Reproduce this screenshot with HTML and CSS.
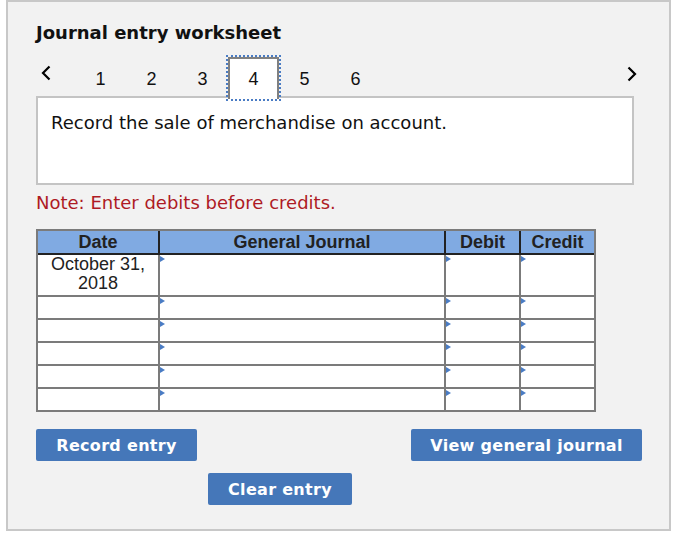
FILE: index.html
```html
<!DOCTYPE html>
<html lang="en">
<head>
    <meta charset="UTF-8">
    <title>Journal entry worksheet</title>
    <link rel="stylesheet" href="styles.css">
</head>
<body>
    <div class="panel">
        <h1>Journal entry worksheet</h1>
        <div class="tabs">
            <span class="arrow prev">
                <svg width="10" height="16" viewBox="0 0 10 16"><polyline points="8.5,1.5 2,8 8.5,14.5" fill="none" stroke="#000" stroke-width="2.2"/></svg>
            </span>
            <span class="tab">1</span>
            <span class="tab">2</span>
            <span class="tab">3</span>
            <span class="tab active">4</span>
            <span class="tab">5</span>
            <span class="tab">6</span>
            <span class="arrow next">
                <svg width="10" height="16" viewBox="0 0 10 16"><polyline points="1.5,1.5 8,8 1.5,14.5" fill="none" stroke="#000" stroke-width="2.2"/></svg>
            </span>
        </div>
        <div class="question">Record the sale of merchandise on account.</div>
        <div class="note">Note: Enter debits before credits.</div>

        <table class="journal">
            <thead>
                <tr>
                    <th class="c-date">Date</th>
                    <th class="c-gj">General Journal</th>
                    <th class="c-amt">Debit</th>
                    <th class="c-amt">Credit</th>
                </tr>
            </thead>
            <tbody>
                <tr class="first">
                    <td class="date">October 31,<br>2018</td>
                    <td class="mark"></td>
                    <td class="mark"></td>
                    <td class="mark"></td>
                </tr>
                <tr><td></td><td class="mark"></td><td class="mark"></td><td class="mark"></td></tr>
                <tr><td></td><td class="mark"></td><td class="mark"></td><td class="mark"></td></tr>
                <tr><td></td><td class="mark"></td><td class="mark"></td><td class="mark"></td></tr>
                <tr><td></td><td class="mark"></td><td class="mark"></td><td class="mark"></td></tr>
                <tr><td></td><td class="mark"></td><td class="mark"></td><td class="mark"></td></tr>
            </tbody>
        </table>

        <div class="actions">
            <button class="btn record">Record entry</button>
            <button class="btn view">View general journal</button>
        </div>
        <button class="btn clear">Clear entry</button>
    </div>
</body>
</html>
```

FILE: styles.css
```css
body {
    margin: 0;
    padding: 0;
    background-color: #fff;
    font-family: "DejaVu Sans", Verdana, sans-serif;
}
.panel {
    width: 633px;
    height: 506px;
    margin: 0 0 0 6px;
    padding: 21px 0 0 28px;
    background-color: #f2f2f2;
    border: 2px solid #c8c8c8;
}
h1 {
    margin: 0;
    font-size: 18px;
    line-height: 20px;
    font-weight: bold;
    color: #111;
}
.tabs {
    display: flex;
    align-items: flex-start;
    width: 601px;
    height: 39px;
    margin-top: 14px;
    font-family: "Liberation Sans", Arial, sans-serif;
    font-size: 18px;
    line-height: 20px;
}
.arrow {
    display: block;
    height: 16px;
    padding-top: 8px;
}
.arrow svg {
    display: block;
}
.arrow.prev {
    width: 34px;
    padding-left: 5px;
}
.arrow.next {
    margin-left: auto;
    padding-top: 9px;
}
.tab {
    display: block;
    width: 51px;
    height: 42px;
    box-sizing: border-box;
    padding-top: 12px;
    text-align: center;
    color: #111;
}
.tab.active {
    position: relative;
    z-index: 1;
    padding-top: 10px;
    background-color: #fff;
    border: 2px solid #808080;
    border-bottom: none;
    outline: 2px dotted #4a7cc4;
}
.question {
    width: 581px;
    height: 70px;
    padding: 15px 0 0 13px;
    background-color: #fff;
    border: 2px solid #c4c4c4;
    font-size: 18px;
    line-height: 20px;
    color: #111;
}
.note {
    margin-top: 8px;
    font-size: 18px;
    line-height: 20px;
    color: #ae1a24;
}
.journal {
    margin-top: 16px;
    width: 560px;
    border-collapse: separate;
    border-spacing: 0;
    border: 2px solid #7b7b7b;
    font-family: "Liberation Sans", Arial, sans-serif;
    font-size: 18px;
    color: #222;
}
.journal th {
    height: 22px;
    padding: 0;
    line-height: 20px;
    background-color: #80aae2;
    border-bottom: 2px solid #222;
    font-weight: bold;
    text-align: center;
}
.journal th + th {
    border-left: 2px solid #222;
}
.journal td {
    height: 21px;
    padding: 0;
    background-color: #fff;
    border-top: 2px solid #7b7b7b;
}
.journal td + td {
    border-left: 2px solid #7b7b7b;
}
.journal tr.first td {
    height: 40px;
    border-top: none;
    vertical-align: top;
}
.journal td.date {
    text-align: center;
    line-height: 19px;
}
.c-date { width: 120px; }
.c-gj { width: 284px; }
.c-amt { width: 73px; }
.journal td.mark {
    position: relative;
}
.journal td.mark::before {
    content: "";
    position: absolute;
    left: 0;
    top: 1px;
    border-left: 5px solid #4a7cc4;
    border-top: 3px solid transparent;
    border-bottom: 3px solid transparent;
}
.actions {
    display: flex;
    justify-content: space-between;
    width: 606px;
    margin-top: 17px;
}
.btn {
    display: block;
    height: 32px;
    padding: 0;
    border: none;
    border-radius: 2px;
    background-color: #4577b9;
    color: #fff;
    font-family: "DejaVu Sans", Verdana, sans-serif;
    font-size: 16px;
    font-weight: bold;
    letter-spacing: 0.3px;
    cursor: pointer;
}
.btn.record { width: 161px; }
.btn.view { width: 231px; }
.btn.clear {
    width: 144px;
    margin: 12px 0 0 172px;
}
```
